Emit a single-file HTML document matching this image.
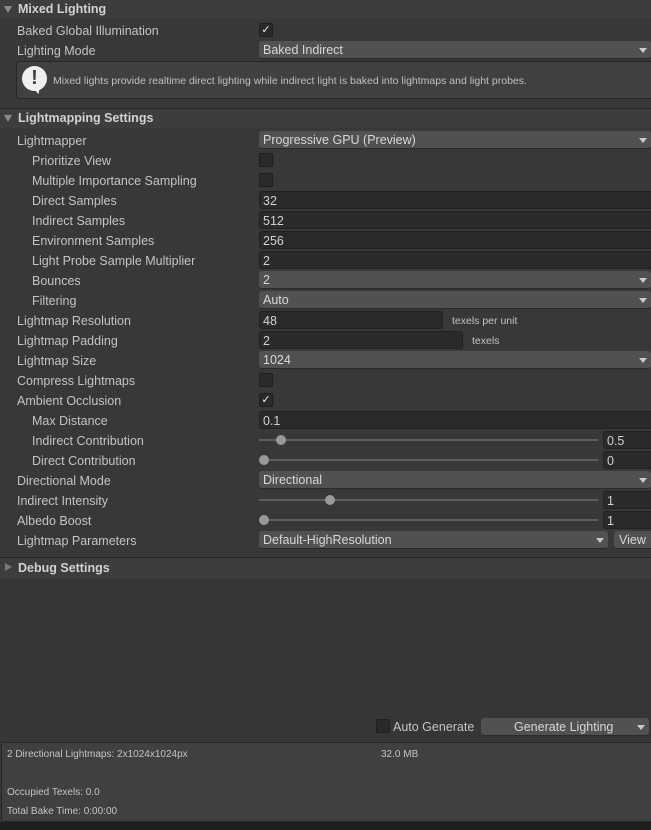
<!DOCTYPE html>
<html><head><meta charset="utf-8"><style>
*{box-sizing:border-box;margin:0;padding:0}
body{width:651px;height:830px;background:#383838;font-family:"Liberation Sans",sans-serif;font-size:12.5px;color:#c4c4c4;position:relative;overflow:hidden}
.a{position:absolute}
.hdr{position:absolute;left:0;width:651px;height:20px;background:#3d3d3d;border-top:1px solid #262626;font-weight:bold;color:#d2d2d2;line-height:19px;padding-left:18px;font-size:12.5px}
.hdr .tri{position:absolute;left:4px;top:6px;width:0;height:0;border-left:4px solid transparent;border-right:4px solid transparent;border-top:7px solid #8a8a8a}
.hdr .tr{position:absolute;left:5px;top:5px;width:0;height:0;border-top:4px solid transparent;border-bottom:4px solid transparent;border-left:7px solid #7a7a7a}
.lbl{position:absolute;height:20px;line-height:22px;white-space:nowrap}
.dd{position:absolute;height:18px;background:#515151;border-radius:3px;border-bottom:1px solid #2a2a2a;line-height:19px;padding-left:4px;color:#d8d8d8}
.dd:after{content:"";position:absolute;right:4px;top:7px;border-left:4px solid transparent;border-right:4px solid transparent;border-top:5px solid #c8c8c8}
.dd.na:after{display:none}
.tf{position:absolute;height:18px;background:#2a2a2a;border:1px solid #212121;border-radius:3px;line-height:18px;padding-left:3px;color:#d2d2d2}
.cb{position:absolute;width:14px;height:14px;background:#2a2a2a;border:1px solid #1f1f1f;border-radius:2px;color:#eee;font-size:11px;line-height:12px;text-align:center}
.sl{position:absolute;height:2px;background:#5e5e5e}
.kn{position:absolute;width:10px;height:10px;border-radius:50%;background:#999}
</style></head><body>
<div class="hdr" style="top:-1px;height:19px"><span class="tri"></span>Mixed Lighting</div>
<div class="lbl" style="left:17px;top:20px">Baked Global Illumination</div>
<div class="cb" style="left:259px;top:23px">✓</div>
<div class="lbl" style="left:17px;top:40px">Lighting Mode</div>
<div class="dd" style="left:259px;top:41px;width:392px">Baked Indirect</div>
<div class="a" style="left:16px;top:61px;width:640px;height:38px;background:#404040;border:1px solid #262626;border-radius:3px"></div>
<div class="a" style="left:22px;top:66px;width:25px;height:25px;border-radius:50%;background:#f0f0f0;color:#404040;font-weight:bold;font-size:20px;text-align:center;line-height:25px">!</div>
<div class="a" style="left:34px;top:86px;width:0;height:0;border-left:3px solid transparent;border-right:5px solid transparent;border-top:8px solid #f0f0f0;transform:rotate(-20deg)"></div>
<div class="lbl" style="left:53px;top:70px;font-size:10.5px;color:#c0c0c0">Mixed lights provide realtime direct lighting while indirect light is baked into lightmaps and light probes.</div>
<div class="hdr" style="top:108px"><span class="tri"></span>Lightmapping Settings</div>

<div class="lbl" style="left:17px;top:130px">Lightmapper</div>
<div class="dd" style="left:259px;top:131px;width:392px">Progressive GPU (Preview)</div>
<div class="lbl" style="left:32px;top:150px">Prioritize View</div>
<div class="cb" style="left:259px;top:153px"></div>
<div class="lbl" style="left:32px;top:170px">Multiple Importance Sampling</div>
<div class="cb" style="left:259px;top:173px"></div>
<div class="lbl" style="left:32px;top:190px">Direct Samples</div>
<div class="tf" style="left:259px;top:191px;width:400px">32</div>
<div class="lbl" style="left:32px;top:210px">Indirect Samples</div>
<div class="tf" style="left:259px;top:211px;width:400px">512</div>
<div class="lbl" style="left:32px;top:230px">Environment Samples</div>
<div class="tf" style="left:259px;top:231px;width:400px">256</div>
<div class="lbl" style="left:32px;top:250px">Light Probe Sample Multiplier</div>
<div class="tf" style="left:259px;top:251px;width:400px">2</div>
<div class="lbl" style="left:32px;top:270px">Bounces</div>
<div class="dd" style="left:259px;top:271px;width:392px">2</div>
<div class="lbl" style="left:32px;top:290px">Filtering</div>
<div class="dd" style="left:259px;top:291px;width:392px">Auto</div>
<div class="lbl" style="left:17px;top:310px">Lightmap Resolution</div>
<div class="tf" style="left:259px;top:311px;width:184px">48</div>
<div class="lbl" style="left:452px;top:310px;font-size:10.5px">texels per unit</div>
<div class="lbl" style="left:17px;top:330px">Lightmap Padding</div>
<div class="tf" style="left:259px;top:331px;width:204px">2</div>
<div class="lbl" style="left:472px;top:330px;font-size:10.5px">texels</div>
<div class="lbl" style="left:17px;top:350px">Lightmap Size</div>
<div class="dd" style="left:259px;top:351px;width:392px">1024</div>
<div class="lbl" style="left:17px;top:370px">Compress Lightmaps</div>
<div class="cb" style="left:259px;top:373px"></div>
<div class="lbl" style="left:17px;top:390px">Ambient Occlusion</div>
<div class="cb" style="left:259px;top:393px">✓</div>
<div class="lbl" style="left:32px;top:410px">Max Distance</div>
<div class="tf" style="left:259px;top:411px;width:400px">0.1</div>
<div class="lbl" style="left:32px;top:430px">Indirect Contribution</div>
<div class="sl" style="left:259px;top:439px;width:339px"></div><div class="kn" style="left:276px;top:435px"></div>
<div class="tf" style="left:603px;top:431px;width:60px">0.5</div>
<div class="lbl" style="left:32px;top:450px">Direct Contribution</div>
<div class="sl" style="left:259px;top:459px;width:339px"></div><div class="kn" style="left:259px;top:455px"></div>
<div class="tf" style="left:603px;top:451px;width:60px">0</div>
<div class="lbl" style="left:17px;top:470px">Directional Mode</div>
<div class="dd" style="left:259px;top:471px;width:392px">Directional</div>
<div class="lbl" style="left:17px;top:490px">Indirect Intensity</div>
<div class="sl" style="left:259px;top:499px;width:339px"></div><div class="kn" style="left:325px;top:495px"></div>
<div class="tf" style="left:603px;top:491px;width:60px">1</div>
<div class="lbl" style="left:17px;top:510px">Albedo Boost</div>
<div class="sl" style="left:259px;top:519px;width:339px"></div><div class="kn" style="left:259px;top:515px"></div>
<div class="tf" style="left:603px;top:511px;width:60px">1</div>
<div class="lbl" style="left:17px;top:530px">Lightmap Parameters</div>
<div class="dd" style="left:259px;top:531px;width:349px">Default-HighResolution</div>
<div class="dd na" style="left:614px;top:531px;width:45px;padding-left:5px">View</div>
<div class="a" style="left:0;top:557px;width:651px;height:1px;background:#262626"></div>
<div class="hdr" style="top:558px;border-top:none;line-height:20px"><span class="tr"></span>Debug Settings</div>
<div class="a" style="left:0;top:578px;width:651px;height:164px;background:#363636"></div>

<div class="cb" style="left:376px;top:719px"></div>
<div class="lbl" style="left:393px;top:716px">Auto Generate</div>
<div class="dd" style="left:481px;top:718px;width:168px;padding-left:33px">Generate Lighting</div>
<div class="a" style="left:1px;top:742px;width:652px;height:80px;background:#404040;border:1px solid #262626;border-radius:2px"></div>
<div class="lbl" style="left:7px;top:744px;font-size:10px">2 Directional Lightmaps: 2x1024x1024px</div>
<div class="lbl" style="left:381px;top:744px;font-size:10px">32.0 MB</div>
<div class="lbl" style="left:7px;top:782px;font-size:10px">Occupied Texels: 0.0</div>
<div class="lbl" style="left:7px;top:801px;font-size:10px">Total Bake Time: 0:00:00</div>
<div class="a" style="left:0;top:822px;width:651px;height:8px;background:#1f1f1f"></div>
</body></html>
